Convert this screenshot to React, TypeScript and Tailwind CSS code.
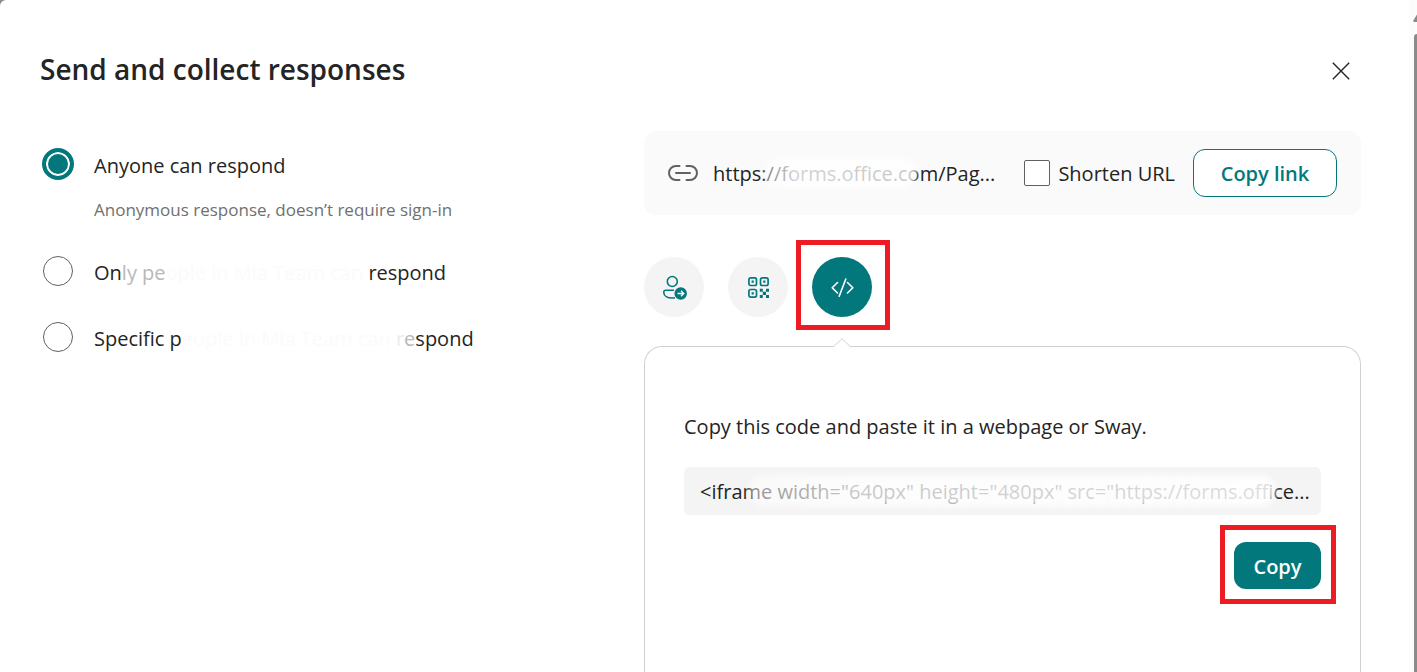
/**
 * Send and collect responses: audience choice on the left, share link and embed code on the right.
 */

import { useState } from 'react';
import type { ReactNode } from 'react';

type Audience = 'anyone' | 'org' | 'specific';
type ShareTab = 'invite' | 'qr' | 'embed';

const SHARE_URL = 'https://forms.office.com/Pag...';
const EMBED_CODE = '<iframe width="640px" height="480px" src="https://forms.office...';

const CloseIcon = () => (
  <svg width="18" height="18" viewBox="0 0 18 18" fill="none" stroke="#242424" strokeWidth="1.4" aria-hidden="true">
    <path d="M0.8 0.8L17.2 17.2M17.2 0.8L0.8 17.2" />
  </svg>
);

const LinkIcon = () => (
  <svg width="30" height="16" viewBox="0 0 30 16" fill="none" stroke="#616161" strokeWidth="2" strokeLinecap="round" aria-hidden="true">
    <path d="M11.5 1H8a7 7 0 0 0 0 14h3.5M18.5 1H22a7 7 0 0 1 0 14h-3.5M8 8h14" />
  </svg>
);

const InviteIcon = () => (
  <svg width="26" height="26" viewBox="0 0 26 26" fill="none" stroke="#03787c" strokeWidth="1.6" aria-hidden="true">
    <circle cx="11.300" cy="7.500" r="5" />
    <path d="M13 16.200H4.600a1.800 1.800 0 0 0-1.800 1.800v.5c0 3.500 3.600 5.500 8.500 5.500 1 0 1.900-.1 2.700-.3" />
    <circle cx="19.700" cy="19.500" r="6.200" fill="#03787c" stroke="none" />
    <path d="M16.500 19.500h6.200M20 16.700l2.800 2.800-2.800 2.800" stroke="#fff" strokeWidth="1.3" />
  </svg>
);

const QrIcon = () => (
  <svg width="24" height="24" viewBox="0 0 24 24" fill="#03787c" aria-hidden="true">
    <g fill="none" stroke="#03787c" strokeWidth="1.7">
      <rect x="2.900" y="2.900" width="7.600" height="7.600" rx="1.800" />
      <rect x="14.500" y="2.900" width="7.600" height="7.600" rx="1.800" />
      <rect x="2.900" y="14.500" width="7.600" height="7.600" rx="1.800" />
    </g>
    <path d="M5.600 5.600h2.200v2.200H5.600zM17.200 5.600h2.200v2.200h-2.200zM5.600 17.200h2.200v2.200H5.600z" />
    <path d="M13.800 13.800h3v3h-3zM20 13.800h3v3h-3zM16.800 16.800h3.200v3.200h-3.200zM13.800 20h3v3h-3zM20 20h3v3h-3z" />
  </svg>
);

const CodeIcon = () => (
  <svg width="24" height="20" viewBox="0 0 24 20" fill="none" stroke="#fff" strokeWidth="1.6" strokeLinecap="round" strokeLinejoin="round" aria-hidden="true">
    <path d="M7.500 5.500L2.200 10.800L7.500 16M17.500 5.500L22.800 10.800L17.500 16M15.800 2L9.200 19.200" />
  </svg>
);

interface RadioOptionProps {
  value: Audience;
  selected: Audience;
  onSelect: (value: Audience) => void;
  children: ReactNode;
}

const RadioOption = ({ value, selected, onSelect, children }: RadioOptionProps) => (
  <label className="flex h-8 items-center gap-5">
    <input
      type="radio"
      name="audience"
      checked={selected === value}
      onChange={() => onSelect(value)}
      className="mx-px size-[30px] shrink-0 appearance-none rounded-full border border-[#616161] checked:mx-0 checked:size-8 checked:border-4 checked:border-[#03787c] checked:bg-[#03787c] checked:shadow-[inset_0_0_0_2px_white]"
    />
    <span className="mt-1">{children}</span>
  </label>
);

interface ShareButtonProps {
  label: string;
  active: boolean;
  onClick: () => void;
  children: ReactNode;
}

const ShareButton = ({ label, active, onClick, children }: ShareButtonProps) => (
  <button
    type="button"
    aria-label={label}
    onClick={onClick}
    className={`flex size-[60px] items-center justify-center rounded-full ${active ? 'bg-[#03787c]' : 'bg-[#f4f4f4]'}`}
  >
    {children}
  </button>
);

const App = () => {
  const [audience, setAudience] = useState<Audience>('anyone');
  const [tab, setTab] = useState<ShareTab>('embed');
  const [shorten, setShorten] = useState(false);

  return (
    <div className="h-screen overflow-hidden bg-[#8a8a8a] font-['Open_Sans','Noto_Sans',sans-serif] text-[20px] leading-7 text-[#242424]">
      <div className="flex h-full rounded-tl-md bg-white">
        <main className="flex min-w-0 flex-1 flex-col pr-12 pl-10">
          <header className="flex items-end justify-between pt-[47px] pr-2">
            <h1 className="text-[28px] leading-11 font-semibold">Send and collect responses</h1>
            <button type="button" aria-label="Close" className="mb-2 p-[3px]">
              <CloseIcon />
            </button>
          </header>

          <div className="mt-10 grid min-h-0 flex-1 grid-cols-[minmax(0,604fr)_minmax(0,717fr)]">
            <fieldset aria-label="Who can respond" className="pt-[17px] pl-0.5">
              <RadioOption value="anyone" selected={audience} onSelect={setAudience}>
                Anyone can respond
              </RadioOption>
              <p className="mt-4 mb-[31px] pl-[52px] text-[17px] text-[#707070]">
                Anonymous response, doesn’t require sign-in
              </p>
              <RadioOption value="org" selected={audience} onSelect={setAudience}>
                On
                <span className="text-[#b8b8b8]">ly pe</span>
                <span className="text-[#fbfbfb]">ople in Mia Team can </span>
                respond
              </RadioOption>
              <div className="mt-[34px]">
                <RadioOption value="specific" selected={audience} onSelect={setAudience}>
                  Specific p
                  <span className="text-[#fbfbfb]">eople in Mia Team can </span>
                  <span className="text-[#ececec]">r</span>
                  <span className="text-[#b8b8b8]">e</span>
                  spond
                </RadioOption>
              </div>
            </fieldset>

            <section className="flex min-h-0 flex-col">
              <div className="flex h-[84px] items-center rounded-xl bg-[#fafafa] px-6">
                <LinkIcon />
                <div className="relative ml-[15px] min-w-0 flex-1">
                  <input
                    readOnly
                    aria-label="Response link"
                    value={SHARE_URL}
                    className="block w-full truncate bg-transparent pt-0.5 outline-none"
                  />
                  <div className="pointer-events-none absolute inset-y-0 right-[30%] left-[17%] rounded-full bg-linear-to-r from-white/40 via-white/80 via-20% to-white/75 blur-[2px]" />
                </div>
                <label className="ml-5 flex shrink-0 items-center gap-2">
                  <input
                    type="checkbox"
                    checked={shorten}
                    onChange={(e) => setShorten(e.target.checked)}
                    className="size-[26px] appearance-none rounded-xs border border-[#616161] bg-white checked:bg-[#03787c]"
                  />
                  <span className="pt-0.5">Shorten URL</span>
                </label>
                <button
                  type="button"
                  className="ml-[18px] h-12 w-36 shrink-0 rounded-xl border border-[#03787c] bg-white pt-0.5 font-semibold text-[#03787c]"
                >
                  Copy link
                </button>
              </div>

              <div className="mt-[42px] flex gap-6">
                <ShareButton label="Invite people" active={tab === 'invite'} onClick={() => setTab('invite')}>
                  <InviteIcon />
                </ShareButton>
                <ShareButton label="QR code" active={tab === 'qr'} onClick={() => setTab('qr')}>
                  <QrIcon />
                </ShareButton>
                <div className="relative">
                  <ShareButton label="Embed" active={tab === 'embed'} onClick={() => setTab('embed')}>
                    <CodeIcon />
                  </ShareButton>
                  <div className="pointer-events-none absolute -top-[17px] -right-[18px] -bottom-[13px] -left-4 border-5 border-[#ed1c24]" />
                </div>
              </div>

              <div className="relative mt-[29px] flex-1 rounded-t-[18px] border border-b-0 border-[#d1d1d1] px-[39px] pt-[66px]">
                <svg className="absolute -top-[9px] left-[188px]" width="18" height="10" viewBox="0 0 18 10" aria-hidden="true">
                  <path d="M0 10V9L9 0.5L18 9V10Z" fill="#fff" />
                  <path d="M0 8.5H0.8L9 0.7L17.2 8.5H18" fill="none" stroke="#d1d1d1" />
                </svg>
                <p>Copy this code and paste it in a webpage or Sway.</p>
                <div className="relative mt-[26px] rounded-md bg-[#f4f4f4]">
                  <input
                    readOnly
                    aria-label="Embed code"
                    value={EMBED_CODE}
                    className="block h-12 w-full truncate bg-transparent pl-4 outline-none"
                  />
                  <div className="pointer-events-none absolute inset-y-2 right-[7%] left-[10%] rounded-full bg-linear-to-r from-white/50 via-white/75 via-20% to-white/85 blur-[3px]" />
                </div>
                <div className="mt-[27px] flex justify-end">
                  <div className="relative">
                    <button type="button" className="block h-[47px] w-[87px] rounded-xl bg-[#03787c] pt-0.5 font-semibold text-white">
                      Copy
                    </button>
                    <div className="pointer-events-none absolute -top-[17px] -right-[15px] -bottom-[15px] -left-[14px] border-5 border-[#ed1c24]" />
                  </div>
                </div>
              </div>
            </section>
          </div>
        </main>

        <div className="flex w-2 shrink-0 flex-col items-end overflow-hidden bg-[#fcfcfc] pt-3.5" aria-hidden="true">
          <svg width="4" height="8" viewBox="0 0 4 8">
            <path d="M4 0.5L0.3 6.5Q0 8 1.5 8H4Z" fill="#8a8a8a" />
          </svg>
          <div className="mt-3 w-[3px] flex-1 rounded-tl-[3px] bg-[#8a8a8a]" />
        </div>
      </div>
    </div>
  );
};

export default App;
